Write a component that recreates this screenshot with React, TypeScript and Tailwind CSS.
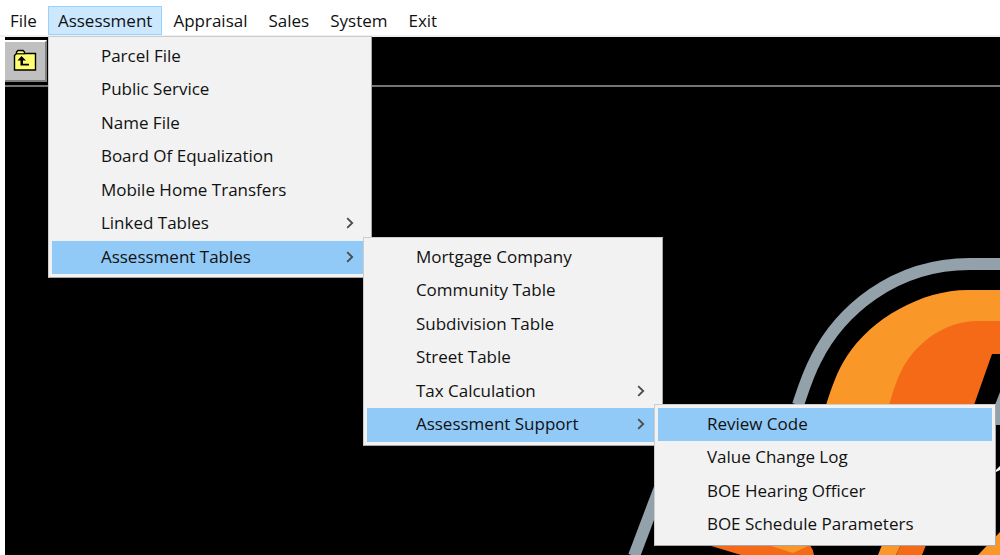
import clsx from 'clsx'

interface MenuEntry {
  label: string
  children?: MenuEntry[]
}

const TOP_MENU = ['File', 'Assessment', 'Appraisal', 'Sales', 'System', 'Exit']

const ASSESSMENT_MENU: MenuEntry[] = [
  { label: 'Parcel File' },
  { label: 'Public Service' },
  { label: 'Name File' },
  { label: 'Board Of Equalization' },
  { label: 'Mobile Home Transfers' },
  { label: 'Linked Tables', children: [] },
  {
    label: 'Assessment Tables',
    children: [
      { label: 'Mortgage Company' },
      { label: 'Community Table' },
      { label: 'Subdivision Table' },
      { label: 'Street Table' },
      { label: 'Tax Calculation', children: [] },
      {
        label: 'Assessment Support',
        children: [
          { label: 'Review Code' },
          { label: 'Value Change Log' },
          { label: 'BOE Hearing Officer' },
          { label: 'BOE Schedule Parameters' },
        ],
      },
    ],
  },
]

const OPEN_PATH = ['Assessment Tables', 'Assessment Support', 'Review Code']

const MENU_WIDTHS = ['w-[324px]', 'w-[300px]', 'w-[342px]']

function Chevron() {
  return (
    <svg className="h-3 w-2" viewBox="0 0 8 12" fill="none" stroke="#4a4a4a" strokeWidth="1.8" aria-hidden="true">
      <path d="M1.2 1.2 6.2 6l-5 4.8" />
    </svg>
  )
}

function Menu({ items, level, label }: { items: MenuEntry[]; level: number; label: string }) {
  return (
    <ul
      role="menu"
      aria-label={label}
      className={clsx(
        'border border-[#cccccc] border-r-[#a8a8a8] border-b-[#a8a8a8] bg-[#f2f2f2] p-[3px]',
        MENU_WIDTHS[level],
      )}
    >
      {items.map((item) => {
        const active = OPEN_PATH[level] === item.label
        return (
          <li key={item.label} role="none" className="relative odd:h-[33px] even:h-[34px]">
            <button
              type="button"
              role="menuitem"
              className={clsx(
                'flex h-full w-full items-center justify-between pr-[14px] pb-0.5 pl-[49px] text-left whitespace-nowrap',
                active && 'bg-[#91c9f7]',
              )}
            >
              {item.label}
              {item.children && <Chevron />}
            </button>
            {active && item.children && (
              <div className="absolute -top-1 left-full z-10 -ml-[5px]">
                <Menu items={item.children} level={level + 1} label={item.label} />
              </div>
            )}
          </li>
        )
      })}
    </ul>
  )
}

function FolderUpIcon() {
  return (
    <svg className="h-6 w-6" viewBox="0 0 24 24" aria-hidden="true">
      <path d="M1.500 21V6.500l2-2V3L5 1.500h5L11.500 3v1.500h11V21z" fill="#ffff70" stroke="#000" strokeWidth="1.400" />
      <path d="M3.500 4.800h8" stroke="#000" strokeWidth="1.200" />
      <path d="M8.500 7 4.500 11.500H7.500V16.500h8.500v-1.800H10V11.500h3z" fill="#000" />
    </svg>
  )
}

function Logo() {
  return (
    <svg className="h-[315px] w-[400px]" viewBox="600 240 400 315" aria-hidden="true">
      <path d="M798 405C804 387 808 374 816 359C839 313 892 264 970 264H1000" fill="none" stroke="#93a1ab" strokeWidth="12" />
      <path d="M634 556 662 482" stroke="#93a1ab" strokeWidth="12" />
      <path d="M826 405C832 387 837 371 847 356C871 319 921 290 968 290H1000V405z" fill="#f99828" />
      <path d="M889 405C893 392 898 374 907 361C924 336 951 321 977 321H1000V405z" fill="#f56a17" />
      <path d="M974 405 992 354h8v51z" fill="#000" />
      <path d="M995 405 1000 392v33h-8z" fill="#93a1ab" />
      <path d="M994 472 1000 466v4l-4 2z" fill="#fff" />
      <path d="M708 545h102q3 4 4 10h-73z" fill="#f56a17" />
      <path d="M768 545h42l-17 8z" fill="#f99828" />
      <path d="M882 545h19l-5 10h-18z" fill="#f99828" />
      <path d="M901 545h25l-4 10h-26z" fill="#f56a17" />
      <path d="M978 555 1000 532v23z" fill="#f99828" />
    </svg>
  )
}

export default function App() {
  return (
    <div className="flex min-h-screen flex-col overflow-hidden bg-white font-['Open_Sans',sans-serif] text-[17px] leading-6 text-[#111]">
      <nav aria-label="Main menu" className="flex h-[37px] items-end gap-px border-b-2 border-[#f0f0f0]">
        {TOP_MENU.map((name) => (
          <div key={name} className="relative">
            <button
              type="button"
              className={clsx(
                'block h-[29px] border px-[9px] whitespace-nowrap',
                name === 'Assessment' ? 'border-[#99d1ff] bg-[#cce8ff]' : 'border-transparent',
              )}
            >
              {name}
            </button>
            {name === 'Assessment' && (
              <div className="absolute top-full left-0 z-10 mt-px">
                <Menu items={ASSESSMENT_MENU} level={0} label="Assessment" />
              </div>
            )}
          </div>
        ))}
      </nav>

      <main className="ml-[5px] flex flex-1 flex-col bg-black">
        <div className="flex h-[50px] items-start border-b-2 border-[#747474] pt-[3px]">
          <button
            type="button"
            aria-label="Up one level"
            className="flex h-[42px] w-[42px] items-center justify-center border-t-2 border-r-2 border-b-2 border-t-white border-r-[#808080] border-b-[#808080] bg-[#c0c0c0]"
          >
            <FolderUpIcon />
          </button>
        </div>
        <div className="flex flex-1 items-end justify-end">
          <Logo />
        </div>
      </main>
    </div>
  )
}
